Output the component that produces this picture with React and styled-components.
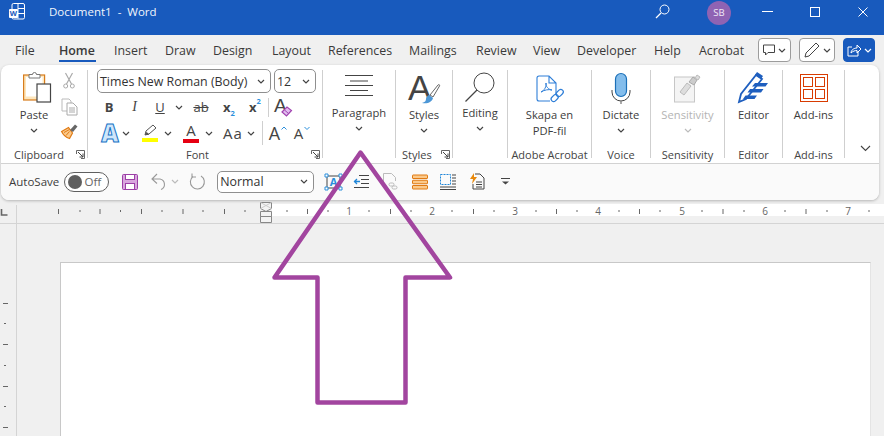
import React from "react";
import styled, { createGlobalStyle } from "styled-components";

const GlobalStyle = createGlobalStyle`
    html, body {
        margin: 0;
        padding: 0;
        background: #f0f0f0;
    }
    * {
        box-sizing: border-box;
    }
`;

const Shell = styled.div`
    position: relative;
    width: 884px;
    height: 436px;
    overflow: hidden;
    display: flex;
    flex-direction: column;
    background: #f0f0f0;
    font-family: "Open Sans", "Noto Sans", sans-serif;
    font-size: 11.5px;
    color: #3c3c3c;
`;

/* title bar */
const TitleBar = styled.div`
    height: 35px;
    flex-shrink: 0;
    display: flex;
    background: #185abd;
    color: #fff;
    padding: 3px 9px 0 9px;
`;

const DocName = styled.div`
    margin-left: 24px;
    line-height: 18px;
    font-size: 11.5px;
    white-space: pre;
    color: #f2f6fc;
`;

const TitleRight = styled.div`
    margin-left: auto;
    display: flex;
    align-items: flex-start;
`;

const Avatar = styled.div`
    width: 24px;
    height: 24px;
    margin: -2px 0 0 33px;
    border-radius: 50%;
    background: #8f63b3;
    color: #f0e8f6;
    font-size: 9.5px;
    line-height: 24px;
    text-align: center;
`;

const WinSlot = styled.div`
    width: 24px;
    height: 17px;
    margin-left: ${(p) => p.$ml || 0}px;
    display: flex;
    align-items: center;
    justify-content: center;
`;

/* tabs */
const TabBar = styled.div`
    height: 30px;
    flex-shrink: 0;
    display: flex;
    align-items: flex-start;
    padding-left: 15px;
`;

const Tab = styled.div`
    position: relative;
    width: ${(p) => p.$w}px;
    height: 30px;
    line-height: 31px;
    font-size: 12.4px;
    white-space: nowrap;
    font-weight: ${(p) => (p.$active ? 600 : 400)};
    color: #3a3a3a;
    &::after {
        content: "";
        display: ${(p) => (p.$active ? "block" : "none")};
        position: absolute;
        left: 0;
        top: 25px;
        width: 37px;
        height: 2px;
        background: #185abd;
    }
`;

const TabActions = styled.div`
    margin-left: auto;
    display: flex;
    gap: 8px;
    padding: 3px 9px 0 0;
`;

const ActionButton = styled.div`
    width: ${(p) => p.$w}px;
    height: 24px;
    display: flex;
    align-items: center;
    justify-content: center;
    gap: 3px;
    border-radius: 4px;
    background: ${(p) => (p.$primary ? "#185abd" : "#fff")};
    border: 1px solid ${(p) => (p.$primary ? "#185abd" : "#9c9c9c")};
`;

/* ribbon */
const Ribbon = styled.div`
    margin: 0 5px 0 1px;
    height: 135px;
    flex-shrink: 0;
    border-radius: 8px;
    background: #fff;
    box-shadow: 0 1px 3px rgba(0, 0, 0, 0.25);
    overflow: hidden;
`;

const RibbonBody = styled.div`
    height: 99px;
    padding-top: 3px;
    display: flex;
    border-bottom: 1px solid #d2d2d2;
`;

const Group = styled.div`
    position: relative;
    width: ${(p) => p.$w}px;
    flex-shrink: 0;
    display: flex;
    flex-direction: column;
    &::after {
        content: "";
        position: absolute;
        right: 0;
        top: 2px;
        width: 1px;
        height: 88px;
        background: #cfcfcf;
    }
`;

const GroupBody = styled.div`
    flex: 1;
    min-height: 0;
    display: flex;
    padding-right: 1px;
`;

const GroupLabel = styled.div`
    position: relative;
    height: 18px;
    line-height: 20px;
    text-align: ${(p) => (p.$launcher ? "left" : "center")};
    padding-left: ${(p) => p.$pl || 0}px;
    padding-right: 1px;
    font-size: 11px;
    white-space: nowrap;
    color: #444;
`;

const Launcher = styled.svg`
    position: absolute;
    right: ${(p) => p.$right}px;
    top: 5px;
`;

const BigButton = styled.div`
    flex: 1;
    display: flex;
    flex-direction: column;
    align-items: center;
    padding-top: ${(p) => p.$top}px;
    color: ${(p) => (p.$muted ? "#b4b4b4" : "#3c3c3c")};
`;

const BigText = styled.div`
    margin-top: ${(p) => p.$mt || 0}px;
    font-size: 11.2px;
    line-height: 16px;
    white-space: nowrap;
    text-align: center;
`;

const ChevronWrap = styled.div`
    height: 14px;
    display: flex;
    align-items: center;
    justify-content: center;
`;

const PasteColumn = styled.div`
    width: 57px;
    display: flex;
    flex-direction: column;
    align-items: center;
    padding: 2px 0 0 9px;
`;

const PasteSlot = styled.div`
    display: flex;
    margin-left: 6px;
`;

const SmallColumn = styled.div`
    width: 22px;
    display: flex;
    flex-direction: column;
    align-items: center;
    gap: 9px;
    padding-top: 4px;
`;

/* font group */
const FontBody = styled.div`
    padding: 1px 0 0 9px;
`;

const SelectRow = styled.div`
    display: flex;
    gap: 3px;
`;

const SelectBox = styled.div`
    width: ${(p) => p.$w}px;
    height: ${(p) => p.$h || 24}px;
    margin-left: ${(p) => p.$ml || 0}px;
    padding: 0 5px 0 2px;
    display: flex;
    align-items: center;
    justify-content: space-between;
    border: 1px solid #8f8f8f;
    border-radius: 5px;
    background: #fff;
    font-size: 12.4px;
    white-space: nowrap;
    color: #333;
    flex-shrink: 0;
`;

const ToolRow = styled.div`
    display: flex;
    align-items: center;
    height: ${(p) => p.$h}px;
    margin-top: ${(p) => p.$mt || 0}px;
    padding-left: ${(p) => p.$pl || 0}px;
`;

const Tool = styled.div`
    position: relative;
    width: ${(p) => p.$w}px;
    margin-left: ${(p) => p.$ml || 0}px;
    height: 22px;
    display: flex;
    align-items: center;
    justify-content: center;
    flex-shrink: 0;
    color: #444;
`;

const ToolSep = styled.div`
    width: 1px;
    height: ${(p) => p.$h}px;
    margin-left: ${(p) => p.$ml || 0}px;
    background: #cfcfcf;
    flex-shrink: 0;
`;

const Glyph = styled.span`
    font-family: ${(p) => (p.$serif ? '"Liberation Serif", serif' : "inherit")};
    font-size: ${(p) => p.$size || 13}px;
    font-weight: ${(p) => p.$weight || 400};
    font-style: ${(p) => (p.$italic ? "italic" : "normal")};
    text-decoration: ${(p) => p.$deco || "none"};
    letter-spacing: ${(p) => p.$track || 0}px;
    line-height: 1;
    color: ${(p) => p.$color || "#444"};
`;

const Script = styled.span`
    font-size: 7.5px;
    font-weight: 700;
    line-height: 1;
    color: #2b8fdc;
    align-self: ${(p) => (p.$up ? "flex-start" : "flex-end")};
    margin-top: ${(p) => (p.$up ? 2 : 0)}px;
    margin-bottom: ${(p) => (p.$up ? 0 : 1)}px;
`;

const OutlineA = styled.span`
    font-size: 24px;
    font-weight: 800;
    line-height: 1;
    color: #cfe6fa;
    -webkit-text-stroke: 1px #1673c6;
`;

const BarGlyph = styled.div`
    display: flex;
    flex-direction: column;
    align-items: center;
    gap: 1px;
`;

const ColorBar = styled.div`
    width: 16px;
    height: 4px;
    background: ${(p) => p.$color};
`;

const CaretMark = styled.svg`
    align-self: flex-start;
    margin: 4px 0 0 1px;
`;

const ExpandButton = styled.div`
    flex: 1;
    display: flex;
    align-items: flex-end;
    justify-content: center;
    padding: 0 0 11px 6px;
`;

/* quick access */
const Qat = styled.div`
    height: 36px;
    padding: 0 0 1px 8px;
    display: flex;
    align-items: center;
    background: #fafafa;
`;

const Toggle = styled.div`
    width: 45px;
    height: 20px;
    margin-left: 5px;
    padding: 0 7px 0 3px;
    display: flex;
    align-items: center;
    justify-content: space-between;
    border: 1px solid #5f5f5f;
    border-radius: 10px;
    background: #fff;
    color: #666;
    &::before {
        content: "";
        width: 14px;
        height: 14px;
        border-radius: 50%;
        background: #5f5f5f;
    }
`;

/* ruler and document */
const RulerBar = styled.div`
    height: 24px;
    flex-shrink: 0;
    border-bottom: 1px solid #d4d4d4;
`;

const DocArea = styled.div`
    flex: 1;
    min-height: 0;
    display: flex;
`;

const VRuler = styled.div`
    width: 17px;
    flex-shrink: 0;
    border-right: 1px solid #d4d4d4;
`;

const Page = styled.div`
    width: 811px;
    margin: 38px 0 0 43px;
    background: #fff;
    border: 1px solid #c8c8c8;
    border-right-color: #e4e4e4;
    border-bottom: none;
`;

const ArrowOverlay = styled.svg`
    position: absolute;
    left: 0;
    top: 0;
    pointer-events: none;
`;

const IconSvg = styled.svg`
    overflow: visible;
    flex-shrink: 0;
`;

const Icon = ({ w, h, children, vb }) => (
    <IconSvg width={w} height={h} viewBox={vb || `0 0 ${w} ${h}`} fill="none">
        {children}
    </IconSvg>
);

const Chevron = ({ color = "#444" }) => (
    <svg width="8" height="5" viewBox="0 0 8 5" fill="none">
        <path d="M1 1l3 3 3-3" stroke={color} strokeWidth="1.2" />
    </svg>
);

const LauncherIcon = ({ right }) => (
    <Launcher $right={right} width="9" height="9" viewBox="0 0 9 9" fill="none">
        <path d="M.5 4V.5h8v8H5" stroke="#666" />
        <path d="M2 2l5 5M7 3.500V7H3.500" stroke="#444" />
    </Launcher>
);

const SizeCaret = ({ down }) => (
    <CaretMark width="6" height="4" viewBox="0 0 6 4" fill="none">
        <path d={down ? "M.5 1L3 3.500 5.500 1" : "M.5 3.500L3 1l2.500 2.500"} stroke="#2b8fdc" />
    </CaretMark>
);

const WordIcon = () => (
    <Icon w={16} h={17}>
        <rect x="3" y=".5" width="12.500" height="15.500" rx="1.500" stroke="#fff" />
        <path d="M9 .5v15M9 5.500h6.500M9 10.500h6.500" stroke="#fff" />
        <rect x="0" y="6" width="9" height="9" rx="1" fill="#fff" />
        <text x="4.500" y="13.200" textAnchor="middle" fontSize="7.500" fontWeight="700" fill="#185abd" fontFamily="Open Sans">W</text>
    </Icon>
);

const PasteIcon = () => (
    <Icon w={28} h={33}>
        <rect x=".6" y="5" width="21" height="25" fill="#fde6bd" stroke="#d77c1c" strokeWidth="1.200" />
        <rect x="3" y="7" width="16.500" height="19.500" fill="#fff" />
        <path d="M6 8V4.500h3.500a2 2 0 0 1 4 0H17V8z" fill="#fff" stroke="#777" />
        <rect x="14" y="14" width="13.500" height="18" fill="#fff" stroke="#444" strokeWidth="1.200" />
    </Icon>
);

const CutIcon = () => (
    <Icon w={12} h={17}>
        <path d="M2.500 1l6 11M9.500 1l-6 11" stroke="#aaa" strokeWidth="1.200" />
        <circle cx="2.700" cy="14" r="2" stroke="#aaa" />
        <circle cx="9.300" cy="14" r="2" stroke="#aaa" />
    </Icon>
);

const CopyIcon = () => (
    <Icon w={17} h={17}>
        <path d="M6 13H1V1h7l2 2v2" stroke="#bbb" />
        <path d="M6 5h6l4 4v8H6z" fill="#fff" stroke="#aaa" />
        <path d="M8 10h6M8 12h6M8 14h6" stroke="#aaa" />
    </Icon>
);

const PainterIcon = () => (
    <Icon w={17} h={15}>
        <path d="M.6 7.500L7.500 3.500l4 5.500-3 5.500C5 13.500 2 10.500.6 7.500z" fill="#fbc98a" stroke="#e07a13" strokeWidth="1.200" />
        <path d="M3 8.500l5.500-3M5 11.500l3.500-4" stroke="#e07a13" />
        <path d="M9 6l5-5.500 2.500 2L12 8z" fill="#666" />
    </Icon>
);

const ClearIcon = () => (
    <Icon w={17} h={19}>
        <text x="-1" y="14" fontSize="19" fill="#444" fontFamily="Liberation Sans">A</text>
        <path d="M7 14l5-5 4.500 3.500-5 5.500z" fill="#e1bdf0" stroke="#a245b0" strokeWidth="1.200" />
        <path d="M9.500 12l4 3.500" stroke="#a245b0" />
    </Icon>
);

const PenIcon = () => (
    <Icon w={17} h={13}>
        <path d="M3 11l1-4 7-6 3 3-7 6z" fill="#fff" stroke="#555" />
        <path d="M3 11h4l-1-2-2-1z" fill="#555" />
    </Icon>
);

const ParagraphIcon = () => (
    <Icon w={28} h={21}>
        <path d="M0 .5h28M5 6h18M0 10.500h28M5 15.500h18M0 20.500h28" stroke="#444" />
    </Icon>
);

const StylesIcon = () => (
    <Icon w={32} h={30}>
        <text x="0" y="25" fontSize="35" fill="#444" fontFamily="Liberation Sans">A</text>
        <path d="M30 10c1-1 2 0 1.500 1L25 22l-3-2z" fill="#fff" stroke="#666" />
        <path d="M21 20l4 3c-1 4-5 6-11 5 3-1 4-2 4-4 0-2 1-3 3-4z" fill="#4d97d6" />
    </Icon>
);

const EditingIcon = () => (
    <Icon w={30} h={30}>
        <circle cx="19" cy="11" r="10" fill="#fff" stroke="#444" />
        <path d="M12 18L.5 29.500" stroke="#444" strokeWidth="1.200" />
    </Icon>
);

const PdfLinkIcon = () => (
    <Icon w={28} h={30}>
        <path d="M1 3a2 2 0 0 1 2-2h10l7 7v11M13 1v7h7M14 26H3a2 2 0 0 1-2-2V3" stroke="#2f7fd8" strokeWidth="1.100" />
        <path d="M5 17c3-1 6-6 5-9-1 3 3 7 6 7-3-1-8 0-11 2z" stroke="#2f7fd8" />
        <rect x="14.500" y="21" width="8" height="5" rx="2.500" transform="rotate(-45 18 23)" stroke="#2f7fd8" strokeWidth="1.200" />
        <rect x="19.500" y="16" width="8" height="5" rx="2.500" transform="rotate(-45 23 18)" stroke="#2f7fd8" strokeWidth="1.200" />
    </Icon>
);

const MicIcon = () => (
    <Icon w={20} h={31}>
        <rect x="4.500" y=".5" width="11" height="23" rx="5.500" fill="#83bdec" stroke="#1c70b8" strokeWidth="1.200" />
        <path d="M1 17v2a9 9 0 0 0 18 0v-2" stroke="#444" />
        <path d="M10 28v3" stroke="#888" strokeWidth="1.400" />
    </Icon>
);

const SensitivityIcon = () => (
    <Icon w={27} h={28}>
        <rect x=".5" y="3" width="20" height="25" fill="#f4f4f4" stroke="#c6c6c6" />
        <path d="M6 18l7-9 4 3-7 9z" fill="#ddd" stroke="#bbb" />
        <path d="M15 8l4-5 4 3-3 5z" fill="#ccc" stroke="#aaa" />
        <path d="M21 4l2-3 3 2-2 3z" fill="#ddd" stroke="#bbb" />
    </Icon>
);

const EditorIcon = () => (
    <Icon w={31} h={31}>
        <path d="M1 30l2-8L18 3l6 4L8 27z" fill="#fff" stroke="#1f5fbf" strokeWidth="1.800" />
        <path d="M17 3l6 4 2-3-6-4zM17 11h13l-2.500 3.500H14zM12 17h13.500L23 20.500H9.500zM7.500 23.500H19L16.500 27H5z" fill="#1f5fbf" />
    </Icon>
);

const AddinsIcon = () => (
    <Icon w={28} h={28}>
        <rect x=".5" y=".5" width="27" height="27" stroke="#d83b01" />
        <rect x="3.500" y="3.500" width="9" height="9" stroke="#d83b01" />
        <rect x="15.500" y="3.500" width="9" height="9" stroke="#d83b01" />
        <rect x="3.500" y="15.500" width="9" height="9" stroke="#d83b01" />
        <rect x="15.500" y="15.500" width="9" height="9" stroke="#d83b01" />
    </Icon>
);

const RULER_LONG = [58.5, 100, 141.5, 183, 224.5, 307.5, 390.5, 473.5, 556.5, 639.5, 723, 806];
const RULER_SHORT = [
    80, 120.5, 162, 203, 245, 287, 328, 369, 411, 452, 494, 536, 577, 619, 660, 702, 744, 785, 827, 869,
];
const RULER_NUMBERS = [349, 432, 515, 598, 682, 765, 848];
const V_LONG = [303, 344, 386, 427];
const V_SHORT = [323, 365, 406];

const RulerDrawing = () => (
    <svg width="884" height="23" viewBox="0 0 884 23" fill="none">
        <rect x="272" y="4" width="612" height="12" fill="#fff" />
        <path d="M16.500 5v18" stroke="#d4d4d4" />
        <path d="M1.500 9v6h6" stroke="#666" strokeWidth="1.600" />
        {RULER_LONG.map((x) => (
            <path key={x} d={`M${x} 9v5`} stroke="#666" />
        ))}
        {RULER_SHORT.map((x) => (
            <path key={x} d={`M${x} 10v2`} stroke="#666" />
        ))}
        {RULER_NUMBERS.map((x, i) => (
            <text key={x} x={x} y="15" textAnchor="middle" fontSize="10" fill="#666" fontFamily="Open Sans">
                {i + 1}
            </text>
        ))}
        <path d="M260.500 2.500h11v6l-5.500 3-5.500-3z" fill="#f4f4f4" stroke="#888" />
        <path d="M260.500 8.500l11-6M271.500 8.500l-11-6" stroke="#ccc" />
        <path d="M260.500 11.500h11v5h-11zM260.500 16.500h11v6h-11z" fill="#f4f4f4" stroke="#888" />
    </svg>
);

const VRulerDrawing = () => (
    <svg width="16" height="212" viewBox="0 224 16 212" fill="none">
        {V_LONG.map((y) => (
            <path key={y} d={`M3 ${y}.5h5`} stroke="#666" />
        ))}
        {V_SHORT.map((y) => (
            <path key={y} d={`M4 ${y}.5h2`} stroke="#666" />
        ))}
    </svg>
);

const TABS = [
    ["File", 44],
    ["Home", 55, true],
    ["Insert", 51],
    ["Draw", 48],
    ["Design", 59],
    ["Layout", 56],
    ["References", 81],
    ["Mailings", 67],
    ["Review", 57],
    ["View", 44],
    ["Developer", 77],
    ["Help", 45],
    ["Acrobat", 50],
];

const App = () => {
    return (
        <Shell>
            <GlobalStyle />
            <TitleBar>
                <WordIcon />
                <DocName>{"Document1  -  Word"}</DocName>
                <TitleRight>
                    <WinSlot>
                        <Icon w={15} h={15}>
                            <circle cx="9.500" cy="5.500" r="4.500" stroke="#fff" />
                            <path d="M6 9l-5 5" stroke="#fff" strokeWidth="1.200" />
                        </Icon>
                    </WinSlot>
                    <Avatar>SB</Avatar>
                    <WinSlot $ml={24}>
                        <Icon w={11} h={1}>
                            <path d="M0 .5h11" stroke="#fff" />
                        </Icon>
                    </WinSlot>
                    <WinSlot $ml={24}>
                        <Icon w={10} h={10}>
                            <rect x=".5" y=".5" width="9" height="9" stroke="#fff" />
                        </Icon>
                    </WinSlot>
                    <WinSlot $ml={24}>
                        <Icon w={10} h={10}>
                            <path d="M.5.5l9 9M9.500.5l-9 9" stroke="#fff" />
                        </Icon>
                    </WinSlot>
                </TitleRight>
            </TitleBar>
            <TabBar>
                {TABS.map(([name, w, active]) => (
                    <Tab key={name} $w={w} $active={active}>
                        {name}
                    </Tab>
                ))}
                <TabActions>
                    <ActionButton $w={33}>
                        <Icon w={12} h={12}>
                            <path d="M.5 1h11v7.500H5L2.500 11V8.500h-2z" stroke="#444" />
                        </Icon>
                        <Chevron />
                    </ActionButton>
                    <ActionButton $w={36}>
                        <Icon w={16} h={16}>
                            <path d="M1 15l1-4L12 1l3 3L5 14z" stroke="#444" />
                        </Icon>
                        <Chevron />
                    </ActionButton>
                    <ActionButton $w={32} $primary>
                        <Icon w={14} h={14}>
                            <path d="M5 4H1v9h10V8" stroke="#fff" />
                            <path d="M4 10c0-3 3-5 6-5V2l4 4-4 4V7.500c-2 0-4 .5-6 2.500z" stroke="#fff" />
                        </Icon>
                        <Chevron color="#fff" />
                    </ActionButton>
                </TabActions>
            </TabBar>
            <Ribbon>
                <RibbonBody>
                    <Group $w={87}>
                        <GroupBody>
                            <PasteColumn>
                                <PasteSlot>
                                    <PasteIcon />
                                </PasteSlot>
                                <BigText $mt={4}>Paste</BigText>
                                <ChevronWrap>
                                    <Chevron />
                                </ChevronWrap>
                            </PasteColumn>
                            <SmallColumn>
                                <CutIcon />
                                <CopyIcon />
                                <PainterIcon />
                            </SmallColumn>
                        </GroupBody>
                        <GroupLabel $launcher $pl={13}>
                            Clipboard
                            <LauncherIcon right={3} />
                        </GroupLabel>
                    </Group>
                    <Group $w={235}>
                        <FontBody>
                            <SelectRow>
                                <SelectBox $w={174}>
                                    <span>Times New Roman (Body)</span>
                                    <Chevron />
                                </SelectBox>
                                <SelectBox $w={42}>
                                    <span>12</span>
                                    <Chevron />
                                </SelectBox>
                            </SelectRow>
                            <ToolRow $h={22} $mt={3}>
                                <Tool $w={24}>
                                    <Glyph $weight={700} $size={13}>B</Glyph>
                                </Tool>
                                <Tool $w={27}>
                                    <Glyph $italic $size={14} $serif>I</Glyph>
                                </Tool>
                                <Tool $w={24}>
                                    <Glyph $deco="underline" $size={13}>U</Glyph>
                                </Tool>
                                <Tool $w={14}>
                                    <Chevron />
                                </Tool>
                                <Tool $w={30}>
                                    <Glyph $deco="line-through" $size={13}>ab</Glyph>
                                </Tool>
                                <Tool $w={26}>
                                    <Glyph $weight={700} $size={13}>x</Glyph>
                                    <Script>2</Script>
                                </Tool>
                                <Tool $w={26}>
                                    <Glyph $weight={700} $size={13}>x</Glyph>
                                    <Script $up>2</Script>
                                </Tool>
                                <ToolSep $h={19} />
                                <Tool $w={28}>
                                    <ClearIcon />
                                </Tool>
                            </ToolRow>
                            <ToolRow $h={24} $mt={3} $pl={2}>
                                <Tool $w={22}>
                                    <OutlineA>A</OutlineA>
                                </Tool>
                                <Tool $w={10}>
                                    <Chevron />
                                </Tool>
                                <Tool $w={24} $ml={7}>
                                    <BarGlyph>
                                        <PenIcon />
                                        <ColorBar $color="#ffff00" />
                                    </BarGlyph>
                                </Tool>
                                <Tool $w={10} $ml={1}>
                                    <Chevron />
                                </Tool>
                                <Tool $w={24} $ml={6}>
                                    <BarGlyph>
                                        <Glyph $size={15}>A</Glyph>
                                        <ColorBar $color="#e60012" />
                                    </BarGlyph>
                                </Tool>
                                <Tool $w={10} $ml={1}>
                                    <Chevron />
                                </Tool>
                                <Tool $w={26} $ml={6}>
                                    <Glyph $size={15} $track={1}>Aa</Glyph>
                                </Tool>
                                <Tool $w={9}>
                                    <Chevron />
                                </Tool>
                                <ToolSep $h={24} $ml={7} />
                                <Tool $w={22} $ml={4}>
                                    <Glyph $size={18}>A</Glyph>
                                    <SizeCaret />
                                </Tool>
                                <Tool $w={22} $ml={2}>
                                    <Glyph $size={15}>A</Glyph>
                                    <SizeCaret down />
                                </Tool>
                            </ToolRow>
                        </FontBody>
                        <GroupLabel $launcher $pl={98}>
                            Font
                            <LauncherIcon right={3} />
                        </GroupLabel>
                    </Group>
                    <Group $w={73}>
                        <GroupBody>
                            <BigButton $top={7}>
                                <ParagraphIcon />
                                <BigText $mt={9}>Paragraph</BigText>
                                <ChevronWrap>
                                    <Chevron />
                                </ChevronWrap>
                            </BigButton>
                        </GroupBody>
                        <GroupLabel />
                    </Group>
                    <Group $w={57}>
                        <GroupBody>
                            <BigButton $top={7}>
                                <StylesIcon />
                                <BigText $mt={2}>Styles</BigText>
                                <ChevronWrap>
                                    <Chevron />
                                </ChevronWrap>
                            </BigButton>
                        </GroupBody>
                        <GroupLabel $launcher $pl={6}>
                            Styles
                            <LauncherIcon right={3} />
                        </GroupLabel>
                    </Group>
                    <Group $w={55}>
                        <GroupBody>
                            <BigButton $top={4}>
                                <EditingIcon />
                                <BigText $mt={3}>Editing</BigText>
                                <ChevronWrap>
                                    <Chevron />
                                </ChevronWrap>
                            </BigButton>
                        </GroupBody>
                        <GroupLabel />
                    </Group>
                    <Group $w={84}>
                        <GroupBody>
                            <BigButton $top={7}>
                                <PdfLinkIcon />
                                <BigText $mt={2}>Skapa en</BigText>
                                <BigText>PDF-fil</BigText>
                            </BigButton>
                        </GroupBody>
                        <GroupLabel>Adobe Acrobat</GroupLabel>
                    </Group>
                    <Group $w={59}>
                        <GroupBody>
                            <BigButton $top={5}>
                                <MicIcon />
                                <BigText $mt={3}>Dictate</BigText>
                                <ChevronWrap>
                                    <Chevron />
                                </ChevronWrap>
                            </BigButton>
                        </GroupBody>
                        <GroupLabel>Voice</GroupLabel>
                    </Group>
                    <Group $w={74}>
                        <GroupBody>
                            <BigButton $top={6} $muted>
                                <SensitivityIcon />
                                <BigText $mt={5}>Sensitivity</BigText>
                                <ChevronWrap>
                                    <Chevron color="#bbb" />
                                </ChevronWrap>
                            </BigButton>
                        </GroupBody>
                        <GroupLabel>Sensitivity</GroupLabel>
                    </Group>
                    <Group $w={58}>
                        <GroupBody>
                            <BigButton $top={4}>
                                <EditorIcon />
                                <BigText $mt={4}>Editor</BigText>
                            </BigButton>
                        </GroupBody>
                        <GroupLabel>Editor</GroupLabel>
                    </Group>
                    <Group $w={62}>
                        <GroupBody>
                            <BigButton $top={6}>
                                <AddinsIcon />
                                <BigText $mt={5}>Add-ins</BigText>
                            </BigButton>
                        </GroupBody>
                        <GroupLabel>Add-ins</GroupLabel>
                    </Group>
                    <ExpandButton>
                        <svg width="11" height="7" viewBox="0 0 11 7" fill="none">
                            <path d="M1 1l4.500 4.500L10 1" stroke="#444" strokeWidth="1.100" />
                        </svg>
                    </ExpandButton>
                </RibbonBody>
                <Qat>
                    <span>AutoSave</span>
                    <Toggle>Off</Toggle>
                    <Tool $w={16} $ml={13}>
                        <Icon w={16} h={16}>
                            <rect x=".5" y=".5" width="15" height="15" rx="1" fill="#d9a6de" stroke="#9c3fa6" />
                            <rect x="3.500" y=".5" width="9" height="5" fill="#fff" stroke="#9c3fa6" />
                            <rect x="3.500" y="9.500" width="9" height="6" fill="#fff" stroke="#9c3fa6" />
                        </Icon>
                    </Tool>
                    <Tool $w={16} $ml={13}>
                        <Icon w={16} h={17}>
                            <path d="M6 1L1 6l5 4.500M1 6h8a5.500 5.500 0 0 1 1 10.500" stroke="#999" strokeWidth="1.100" />
                        </Icon>
                    </Tool>
                    <Tool $w={8} $ml={4}>
                        <Chevron color="#bbb" />
                    </Tool>
                    <Tool $w={17} $ml={10}>
                        <Icon w={17} h={17}>
                            <path d="M12 3a7 7 0 1 1-8 .5M3 .5V4h4" stroke="#999" strokeWidth="1.100" />
                        </Icon>
                    </Tool>
                    <SelectBox $w={97} $h={22} $ml={11}>
                        <span>Normal</span>
                        <Chevron />
                    </SelectBox>
                    <Tool $w={17} $ml={11}>
                        <Icon w={17} h={16}>
                            <rect x="2" y="2" width="13" height="12" stroke="#444" />
                            <path d="M0 0h3v3H0zM14 0h3v3h-3zM0 13h3v3H0zM14 13h3v3h-3z" fill="#fff" stroke="#2b8fdc" />
                            <text x="8.500" y="12" textAnchor="middle" fontSize="11" fontWeight="700" fill="#2b8fdc" fontFamily="Open Sans">A</text>
                        </Icon>
                    </Tool>
                    <Tool $w={15} $ml={12}>
                        <Icon w={15} h={13}>
                            <path d="M5 .5h10M7 4.500h8M7 8.500h8M0 12.500h15" stroke="#444" />
                            <path d="M0 6.500h6M3 4L.5 6.500 3 9" stroke="#1f86d8" strokeWidth="1.300" />
                        </Icon>
                    </Tool>
                    <Tool $w={15} $ml={14}>
                        <Icon w={15} h={17}>
                            <path d="M.5 13V.5h8l4 4V8" stroke="#bbb" />
                            <rect x="6" y="10" width="5" height="3" rx="1.500" stroke="#bbb" />
                            <rect x="9" y="13" width="5" height="3" rx="1.500" stroke="#bbb" />
                        </Icon>
                    </Tool>
                    <Tool $w={16} $ml={14}>
                        <Icon w={16} h={16}>
                            <rect x=".5" y="1" width="15" height="3.500" rx=".5" fill="#fbc98a" stroke="#e07a13" />
                            <rect x=".5" y="6.250" width="15" height="3.500" rx=".5" fill="#fbc98a" stroke="#e07a13" />
                            <rect x=".5" y="11.500" width="15" height="3.500" rx=".5" fill="#fbc98a" stroke="#e07a13" />
                        </Icon>
                    </Tool>
                    <Tool $w={16} $ml={12}>
                        <Icon w={16} h={16}>
                            <rect x=".5" y=".5" width="10" height="10" stroke="#1f86d8" strokeDasharray="2 1" />
                            <path d="M12 1h4M12 4h4M12 7h4M12 10h4M0 13h16M0 15.500h16" stroke="#444" />
                        </Icon>
                    </Tool>
                    <Tool $w={15} $ml={13}>
                        <Icon w={15} h={17}>
                            <path d="M6 1h5l4 4v11H4v-5" stroke="#444" />
                            <path d="M7 9h6M7 11.500h6M7 14h6" stroke="#444" />
                            <path d="M5 0L1 6h3l-1 5 5-7H5z" fill="#e8890c" />
                        </Icon>
                    </Tool>
                    <Tool $w={9} $ml={17}>
                        <Icon w={9} h={7}>
                            <path d="M0 .5h9" stroke="#444" />
                            <path d="M1 3.500l3.500 3 3.500-3z" fill="#444" />
                        </Icon>
                    </Tool>
                </Qat>
            </Ribbon>
            <RulerBar>
                <RulerDrawing />
            </RulerBar>
            <DocArea>
                <VRuler>
                    <VRulerDrawing />
                </VRuler>
                <Page />
            </DocArea>
            <ArrowOverlay width="884" height="436" viewBox="0 0 884 436" fill="none">
                <path
                    d="M360.500 152.500L450 277.500H405.500V402.500H317.500V277.500H274.500z"
                    stroke="#a2459f"
                    strokeWidth="4.500"
                    strokeLinejoin="round"
                />
            </ArrowOverlay>
        </Shell>
    );
};

export default App;
